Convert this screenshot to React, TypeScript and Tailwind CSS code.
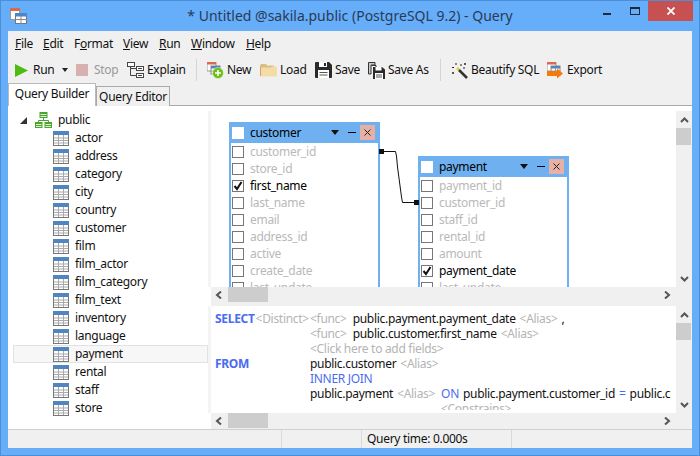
import type { ReactNode } from 'react';

const FONT = "font-['Noto_Sans','Open_Sans',sans-serif]";

const tables = ['actor', 'address', 'category', 'city', 'country', 'customer', 'film', 'film_actor', 'film_category', 'film_text', 'inventory', 'language', 'payment', 'rental', 'staff', 'store'];

function TableIcon() {
  return (
    <svg width="16" height="15" viewBox="0 0 16 15" className="shrink-0">
      <rect x="0" y="0" width="16" height="15" fill="#777" />
      <rect x="0" y="0" width="16" height="4" fill="#4f86c0" />
      <rect x="1" y="4" width="14" height="10" fill="#fff" />
      <path d="M1 7h14M1 9.500h14M1 12h14M5.500 4v10M10.500 4v10" stroke="#aaa" strokeWidth="1" />
    </svg>
  );
}

function SchemaIcon() {
  return (
    <svg width="17" height="16" viewBox="0 0 17 16" className="shrink-0">
      <rect x="4.500" y="0" width="8" height="6" fill="#4aa52e" />
      <path d="M5.500 2.500h6M5.500 4.500h6" stroke="#dff0d8" />
      <path d="M8.500 6v3M3.500 10V8.500h10V10" stroke="#4aa52e" fill="none" />
      <rect x="0" y="10" width="7.500" height="6" fill="#4aa52e" />
      <rect x="9.500" y="10" width="7.500" height="6" fill="#4aa52e" />
      <path d="M1 12.500h5.500M1 14.500h5.500M10.500 12.500h5.500M10.500 14.500h5.500" stroke="#dff0d8" />
    </svg>
  );
}

function MiniTables() {
  return (
    <>
      <rect x="0" y="0" width="9" height="9" fill="#fff" stroke="#999" />
      <rect x="0" y="0" width="9" height="2.500" fill="#d9694f" />
      <rect x="4" y="4" width="9" height="8" fill="#fff" stroke="#888" />
      <rect x="4" y="4" width="9" height="2.500" fill="#4f86c0" />
      <path d="M4 9h9M8.500 6v6" stroke="#999" />
    </>
  );
}

function AppIcon() {
  return (
    <svg width="17" height="16" viewBox="0 0 17 16" className="shrink-0">
      <rect x="0.500" y="0.500" width="9" height="11" fill="#fff" stroke="#999" />
      <rect x="0" y="0" width="10" height="3" fill="#d9694f" />
      <rect x="5.500" y="5.500" width="11" height="10" fill="#fff" stroke="#777" />
      <rect x="5" y="5" width="12" height="3.500" fill="#4f86c0" />
      <path d="M5.500 11.500h11M11 8v8" stroke="#888" />
    </svg>
  );
}

function RunIcon() {
  return (
    <svg width="13" height="13" viewBox="0 0 13 13"><path d="M0 0L13 6.500L0 13Z" fill="#4dbb12" /></svg>
  );
}

function ExplainIcon() {
  return (
    <svg width="17" height="16" viewBox="0 0 17 16" fill="none" stroke="#444">
      <rect x="0.500" y="0.500" width="7" height="4" fill="#fff" />
      <rect x="9.500" y="4.500" width="7" height="4" fill="#fff" />
      <rect x="9.500" y="11.500" width="7" height="4" fill="#fff" />
      <path d="M3.500 5v8.500h6M3.500 6.500h6M11 6.500h4M11 13.500h4" />
    </svg>
  );
}

function NewIcon() {
  return (
    <svg width="17" height="17" viewBox="0 0 17 17">
      <MiniTables />
      <circle cx="11" cy="11" r="5.500" fill="#6cbf14" stroke="#fff" strokeWidth="0.500" />
      <path d="M11 8v6M8 11h6" stroke="#fff" strokeWidth="1.600" />
    </svg>
  );
}

function LoadIcon() {
  return (
    <svg width="17" height="14" viewBox="0 0 17 14">
      <path d="M0 2.500L1 1h5l1 1.500h7v4H0Z" fill="#d9bd83" />
      <path d="M1 4.500H11l1.500-1H17V13.500H1Z" fill="#f4dca6" />
      <path d="M0 3.500V12.500L1 13.500V5Z" fill="#c9a867" />
    </svg>
  );
}

function SaveIcon() {
  return (
    <svg width="17" height="16" viewBox="0 0 17 16">
      <path d="M0 1a1 1 0 0 1 1-1H14L17 3V15a1 1 0 0 1-1 1H1a1 1 0 0 1-1-1Z" fill="#2a2a2a" />
      <rect x="4" y="0" width="8" height="5" fill="#fff" />
      <rect x="9" y="1" width="2" height="3" fill="#2a2a2a" />
      <rect x="3" y="8" width="11" height="8" fill="#fff" />
      <path d="M4.500 10.500h8M4.500 13h8" stroke="#555" />
    </svg>
  );
}

function SaveAsIcon() {
  return (
    <svg width="17" height="17" viewBox="0 0 17 17">
      <path d="M0.500 0.500H7V3H3V12H0.500Z" fill="#ccc" stroke="#333" />
      <path d="M3.500 3.500H8V6" fill="#fff" stroke="#333" />
      <path d="M5 5H14L17 7.500V17H5Z" fill="#2a2a2a" />
      <rect x="7.500" y="5" width="6" height="3.500" fill="#fff" />
      <rect x="7" y="11" width="8" height="6" fill="#fff" />
      <path d="M8 13h6M8 15h6" stroke="#555" />
    </svg>
  );
}

function WandIcon() {
  return (
    <svg width="17" height="17" viewBox="0 0 17 17">
      <path d="M6 6L8 8" stroke="#f0d020" strokeWidth="2.500" />
      <path d="M8 8L16 16" stroke="#333" strokeWidth="2.500" />
      <path d="M1 5.500h2M5 1v2M10 2v2M14 1v2M13 2h2M12 6h2M1 11h2M2 10v2" stroke="#222" />
    </svg>
  );
}

function ExportIcon() {
  return (
    <svg width="17" height="17" viewBox="0 0 17 17">
      <MiniTables />
      <path d="M0 9h10V6.500L16 11.500L10 16.500V14H0Z" fill="#f47a0c" />
    </svg>
  );
}

function Chevron({ dir }: { dir: 'up' | 'down' | 'left' | 'right' }) {
  const d = {
    up: 'M1 6L4.500 2.500L8 6',
    down: 'M1 2L4.500 5.500L8 2',
    left: 'M6 0.500L2 4L6 7.500',
    right: 'M2 0.500L6 4L2 7.500',
  }[dir];
  return (
    <svg width="9" height="8" viewBox="0 0 9 8" fill="none" stroke="#555" strokeWidth="2"><path d={d} /></svg>
  );
}

function VScroll() {
  return (
    <div className="flex w-4 shrink-0 flex-col items-center bg-[#f0f0f0]">
      <div className="flex h-[17px] w-full items-center justify-center"><Chevron dir="up" /></div>
      <div className="h-[17px] w-[15px] self-start bg-[#cdcdcd]" />
      <div className="flex w-full flex-1 items-end justify-center pb-1"><Chevron dir="down" /></div>
    </div>
  );
}

function HScroll({ className }: { className: string }) {
  return (
    <div className={`flex items-start bg-[#f0f0f0] ${className}`}>
      <div className="flex h-[15px] w-[17px] items-center justify-center"><Chevron dir="left" /></div>
      <div className="h-[15px] w-10 bg-[#cdcdcd]" />
      <div className="ml-auto flex h-[15px] w-[17px] items-center justify-center"><Chevron dir="right" /></div>
    </div>
  );
}

function Check({ on }: { on?: boolean }) {
  return (
    <span className="flex h-3 w-3 shrink-0 items-center justify-center border border-[#777] bg-white">
      {on && (
        <svg width="10" height="10" viewBox="0 0 10 10" fill="none" stroke="#111" strokeWidth="2"><path d="M1.500 5L4 8L8.500 1" /></svg>
      )}
    </span>
  );
}

// floating table node on the diagram canvas
function TableNode({ name, cols, checked, pos }: { name: string; cols: string[]; checked: string; pos: string }) {
  return (
    <div className={`absolute w-[151px] border-x-2 border-[#6fb0f0] bg-white ${pos}`}>
      <div className="flex h-[21px] items-center bg-[#6fb0f0] pl-[1px]">
        <span className="h-3 w-3 bg-white" />
        <span className="ml-1.5 flex-1 text-black">{name}</span>
        <svg width="8" height="5" viewBox="0 0 8 5" className="mr-[9px]"><path d="M0 0H8L4 5Z" fill="#111" /></svg>
        <span className="mr-1 h-[1px] w-2 bg-black" />
        <span className="mr-[3px] flex h-[15px] w-[15px] items-center justify-center bg-[#e6b0a4]">
          <svg width="7" height="7" viewBox="0 0 7 7" stroke="#222"><path d="M0.500 0.500L6.500 6.500M6.500 0.500L0.500 6.500" /></svg>
        </span>
      </div>
      {cols.map((c) => (
        <div key={c} className="flex h-[17px] items-center gap-1.5 pl-[1px]">
          <Check on={c === checked} />
          <span className={c === checked ? 'text-black' : 'text-[#b9b9b9]'}>{c}</span>
        </div>
      ))}
    </div>
  );
}

function ToolItem({ icon, label, className, dim }: { icon: ReactNode; label: string; className: string; dim?: boolean }) {
  return (
    <div className={`flex items-center gap-[3px] ${className}`}>
      {icon}
      <span className={dim ? 'text-[#999]' : 'text-[#111]'}>{label}</span>
    </div>
  );
}

function Alias({ children, className = '' }: { children: string; className?: string }) {
  return <span className={`text-[#b4b4b4] ${className}`}>{children}</span>;
}

function SqlLine({ head, children }: { head?: ReactNode; children: ReactNode }) {
  return (
    <div className="flex h-[15px] items-center whitespace-nowrap">
      <div className="w-[95px] shrink-0 font-bold text-[#4a6cf0]">{head}</div>
      {children}
    </div>
  );
}

export default function App() {
  return (
    <div className={`flex h-[456px] w-[700px] flex-col overflow-hidden border border-[#4a8fd8] bg-[#66aefa] text-xs leading-none tracking-[-0.3px] ${FONT}`}>
      {/* Title bar */}
      <div className="relative flex h-[30px] shrink-0 items-center pl-[9px]">
        <AppIcon />
        <div className="flex-1 pl-[81px] text-center text-[14px] tracking-normal text-[#2a3a55]">* Untitled @sakila.public (PostgreSQL 9.2) - Query</div>
        <div className="flex h-[20px] self-start">
          <div className="flex w-[30px] justify-center pt-[12px]"><span className="h-[2px] w-2 bg-[#1c2a40]" /></div>
          <div className="flex w-[26px] justify-center pt-[6px]"><span className="h-2 w-2.5 border border-t-2 border-[#1c2a40]" /></div>
          <div className="mr-[6px] flex w-[45px] items-center justify-center bg-[#c75050]">
            <svg width="8" height="8" viewBox="0 0 8 8" stroke="#fff" strokeWidth="1.800"><path d="M0.500 0.500L7.500 7.500M7.500 0.500L0.500 7.500" /></svg>
          </div>
        </div>
      </div>

      {/* Client area */}
      <div className="mx-[7px] flex min-h-0 flex-1 flex-col bg-[#f0f0f0]">
        {/* Menu */}
        <div className="flex h-6 shrink-0 items-center pl-[7px] pt-[2px] text-[#111]">
          <span className="w-[28px]"><u>F</u>ile</span>
          <span className="w-[31px]"><u>E</u>dit</span>
          <span className="w-[49px]">F<u>o</u>rmat</span>
          <span className="w-[36px]"><u>V</u>iew</span>
          <span className="w-[32px]"><u>R</u>un</span>
          <span className="w-[55px]"><u>W</u>indow</span>
          <span><u>H</u>elp</span>
        </div>

        {/* Toolbar */}
        <div className="flex h-[28px] shrink-0 items-center pl-[7px] pt-[2px]">
          <ToolItem icon={<RunIcon />} label="Run" className="w-[47px] gap-[5px]" />
          <svg width="6" height="4" viewBox="0 0 6 4" className="mr-[8px]"><path d="M0 0H6L3 4Z" fill="#222" /></svg>
          <ToolItem icon={<span className="h-3 w-3 bg-[#d8b0b0]" />} label="Stop" className="w-[51px] gap-[6px]" dim />
          <ToolItem icon={<ExplainIcon />} label="Explain" className="w-[69px]" />
          <span className="h-[22px] w-[1px] bg-[#d5d5d5]" />
          <ToolItem icon={<NewIcon />} label="New" className="ml-[10px] w-[53px]" />
          <ToolItem icon={<LoadIcon />} label="Load" className="w-[55px]" />
          <ToolItem icon={<SaveIcon />} label="Save" className="w-[53px]" />
          <ToolItem icon={<SaveAsIcon />} label="Save As" className="w-[72px]" />
          <span className="h-[22px] w-[1px] bg-[#d5d5d5]" />
          <ToolItem icon={<WandIcon />} label="Beautify SQL" className="ml-[10px] w-[96px]" />
          <ToolItem icon={<ExportIcon />} label="Export" className="" />
        </div>

        {/* Tabs */}
        <div className="flex h-[23px] shrink-0 items-end">
          <div className="z-10 flex h-[23px] w-[88px] items-center justify-center border-x border-t border-[#bbb] bg-white pb-0.5 text-[#111]">Query Builder</div>
          <div className="flex h-[20px] w-[74px] items-center justify-center border-x border-t border-[#aaa] bg-[#f0f0f0] text-[#111]">Query Editor</div>
          <div className="h-[1px] flex-1 bg-[#aaa]" />
        </div>

        {/* Main area */}
        <div className="flex min-h-0 flex-1 bg-white">
          {/* Tree */}
          <div className="w-[200px] shrink-0 pl-[5px] pt-[5px] text-[#111]">
            <div className="flex h-[18px] items-center">
              <svg width="7" height="7" viewBox="0 0 7 7" className="ml-[7px] mr-[8px]"><path d="M7 0V7H0Z" fill="#333" /></svg>
              <SchemaIcon />
              <span className="ml-[6px]">public</span>
            </div>
            {tables.map((t) => (
              <div key={t} className={`flex h-[18px] items-center pl-[40px] ${t === 'payment' ? 'bg-[#f7f7f7] outline outline-[#e2e2e2] -outline-offset-1' : ''}`}>
                <TableIcon />
                <span className="ml-[6px]">{t}</span>
              </div>
            ))}
          </div>

          {/* Right column */}
          <div className="flex min-w-0 flex-1 flex-col pt-[5px]">
            <div className="flex h-[176px] shrink-0">
              <div className="w-[3px] shrink-0 bg-[#f4f4f4]" />
              <div className="relative min-w-0 flex-1 overflow-hidden bg-white">
                <TableNode name="customer" pos="left-[18px] top-[11px]" checked="first_name" cols={['customer_id', 'store_id', 'first_name', 'last_name', 'email', 'address_id', 'active', 'create_date', 'last_update']} />
                <TableNode name="payment" pos="left-[207px] top-[45px]" checked="payment_date" cols={['payment_id', 'customer_id', 'staff_id', 'rental_id', 'amount', 'payment_date', 'last_update']} />
                <svg width="45" height="60" viewBox="0 0 45 60" className="absolute left-[167px] top-[36px]">
                  <path d="M3 4.500H17.500L18.500 9L19.500 20L23.500 50L24.500 55.500H38" fill="none" stroke="#111" strokeWidth="1" />
                  <rect x="1" y="2" width="5" height="5" fill="#111" />
                  <rect x="36" y="53" width="5" height="5" fill="#111" />
                </svg>
              </div>
              <VScroll />
            </div>
            <HScroll className="ml-[3px] h-[19px] shrink-0 pr-[16px]" />

            <div className="flex min-h-0 flex-1">
              <div className="w-[3px] shrink-0 bg-[#f4f4f4]" />
              <div className="min-w-0 flex-1 bg-white pl-1 pr-[5px] pt-[5px] text-[#111]">
                <div className="h-[99px] overflow-hidden">
                  <SqlLine head={<span>SELECT<span className="ml-px font-normal text-[#b4b4b4]">&lt;Distinct&gt;</span></span>}>
                    <Alias>&lt;func&gt;</Alias>
                    <span className="ml-1.5">public.payment.payment_date</span>
                    <Alias className="ml-1">&lt;Alias&gt;</Alias>
                    <span className="ml-1">,</span>
                  </SqlLine>
                  <SqlLine>
                    <Alias>&lt;func&gt;</Alias>
                    <span className="ml-1.5">public.customer.first_name</span>
                    <Alias className="ml-1">&lt;Alias&gt;</Alias>
                  </SqlLine>
                  <SqlLine><Alias>&lt;Click here to add fields&gt;</Alias></SqlLine>
                  <SqlLine head="FROM">
                    <span>public.customer</span>
                    <Alias className="ml-1">&lt;Alias&gt;</Alias>
                  </SqlLine>
                  <SqlLine><span className="text-[#4a6cf0]">INNER JOIN</span></SqlLine>
                  <SqlLine>
                    <span>public.payment</span>
                    <Alias className="ml-1">&lt;Alias&gt;</Alias>
                    <span className="ml-1.5 text-[#4a6cf0]">ON</span>
                    <span className="ml-1">public.payment.customer_id</span>
                    <span className="mx-1 text-[#4a6cf0]">=</span>
                    <span>public.customer.customer_id</span>
                  </SqlLine>
                  <SqlLine><Alias className="ml-[131px]">&lt;Constrains&gt;</Alias></SqlLine>
                </div>
              </div>
              <VScroll />
            </div>
            <HScroll className="ml-[3px] h-4 shrink-0 pr-[16px]" />
          </div>
        </div>

        {/* Status bar */}
        <div className="flex h-[19px] shrink-0 border-t border-[#d0d0d0] bg-[#f0f0f0] text-[#111]">
          <div className="w-[274px] border-r border-[#d9d9d9]" />
          <div className="w-[80px] border-r border-[#d9d9d9]" />
          <div className="flex w-[150px] items-center border-r border-[#d9d9d9] pl-[5px]">Query time: 0.000s</div>
        </div>
      </div>
      <div className="h-[7px] shrink-0" />
    </div>
  );
}
